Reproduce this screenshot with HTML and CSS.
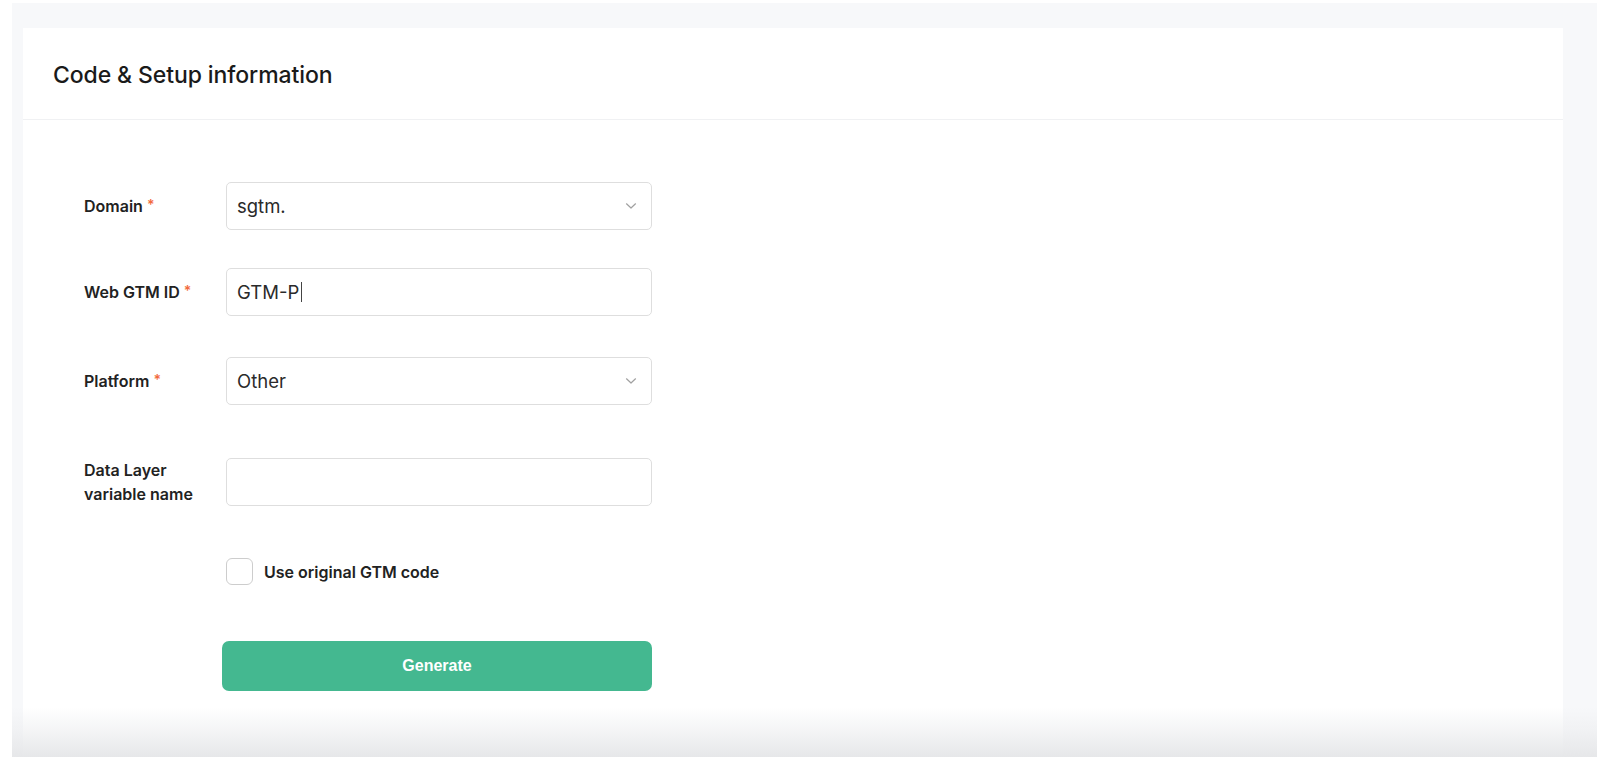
FILE: index.html
```html
<!DOCTYPE html>
<html lang="en">
<head>
<meta charset="utf-8">
<title>Code &amp; Setup information</title>
<link rel="stylesheet" href="styles.css">
</head>
<body>
<div class="frame">
  <div class="card">
    <div class="card-header">Code &amp; Setup information</div>
    <div class="card-body">
      <div class="row row-domain">
        <label class="label">Domain <span class="req">*</span></label>
        <div class="control select">
          <span class="value">sgtm.</span>
          <svg class="chev" width="12" height="8" viewBox="0 0 12 8"><path d="M1.5 1.8l4.5 4.2 4.5-4.2" fill="none" stroke="#a0a0a0" stroke-width="1.2" stroke-linecap="round" stroke-linejoin="round"/></svg>
        </div>
      </div>
      <div class="row row-gtm">
        <label class="label">Web GTM ID <span class="req">*</span></label>
        <div class="control"><span class="value">GTM-P</span><span class="caret"></span></div>
      </div>
      <div class="row row-platform">
        <label class="label">Platform <span class="req">*</span></label>
        <div class="control select">
          <span class="value">Other</span>
          <svg class="chev" width="12" height="8" viewBox="0 0 12 8"><path d="M1.5 1.8l4.5 4.2 4.5-4.2" fill="none" stroke="#a0a0a0" stroke-width="1.2" stroke-linecap="round" stroke-linejoin="round"/></svg>
        </div>
      </div>
      <div class="row row-dl">
        <label class="label label-two">Data Layer<br>variable name</label>
        <div class="control"></div>
      </div>
      <div class="row row-check">
        <span class="label"></span>
        <div class="check"><span class="box"></span><span class="check-text">Use original GTM code</span></div>
      </div>
      <div class="row row-btn">
        <span class="label"></span>
        <button class="btn">Generate</button>
      </div>
    </div>
  </div>
  <div class="fade"></div>
</div>
</body>
</html>
```
FILE: styles.css
```css
html, body {
  margin: 0;
  padding: 0;
  background: #ffffff;
  height: 758px;
  overflow: hidden;
  font-family: Inter, "Open Sans", "Liberation Sans", sans-serif;
  color: #1f1f1f;
}

.frame {
  position: relative;
  margin: 3px 3px 0 12px;
  height: 754px;
  background: #f7f8fa;
  padding: 25px 34px 0 11px;
  box-sizing: border-box;
  overflow: hidden;
}

.card {
  background: #ffffff;
  height: 760px;
}

.card-header {
  height: 92px;
  border-bottom: 1px solid #f0f1f3;
  padding: 2px 0 0 30px;
  display: flex;
  align-items: center;
  font-size: 23px;
  font-weight: 500;
  color: #1a1a1a;
  letter-spacing: -0.1px;
  box-sizing: border-box;
}

.card-body {
  padding: 62px 0 0 61px;
  display: flex;
  flex-direction: column;
}

.row {
  display: flex;
  align-items: center;
}

.label {
  width: 142px;
  flex: none;
  font-size: 16px;
  font-weight: 600;
  color: #222;
  line-height: 24px;
}

.label-two {
  margin-top: 1px;
}

.req {
  color: #f26a3d;
  font-weight: 600;
  font-size: 14px;
  position: relative;
  top: -2px;
}

.control {
  width: 426px;
  height: 48px;
  box-sizing: border-box;
  border: 1px solid #dedede;
  border-radius: 5px;
  display: flex;
  align-items: center;
  padding: 0 14px 0 10px;
  font-size: 18.5px;
  color: #2a2a2a;
  background: #fff;
}

.select {
  justify-content: space-between;
}

.caret {
  width: 1px;
  height: 20px;
  background: #444;
  margin-left: 2px;
}

.row-gtm { margin-top: 38px; }
.row-platform { margin-top: 41px; }
.row-dl { margin-top: 52px; }
.row-check { margin-top: 52px; }
.row-btn { margin-top: 56px; }

.check {
  display: flex;
  align-items: center;
  gap: 11px;
}

.box {
  width: 27px;
  height: 27px;
  box-sizing: border-box;
  border: 1px solid #cdcdcd;
  border-radius: 6px;
  background: #fff;
}

.check-text {
  font-size: 16px;
  font-weight: 600;
  color: #222;
}

.btn {
  margin-left: -4px;
  width: 430px;
  height: 50px;
  border: none;
  border-radius: 7px;
  background: #44b890;
  color: #ffffff;
  font-family: "Liberation Sans", Arial, sans-serif;
  font-weight: 700;
  font-size: 16px;
}

.fade {
  position: absolute;
  left: 0;
  right: 0;
  bottom: 0;
  height: 50px;
  background: linear-gradient(to bottom, rgba(240,241,243,0) 0%, rgba(236,237,239,0.55) 45%, #e6e7e9 100%);
}
```
